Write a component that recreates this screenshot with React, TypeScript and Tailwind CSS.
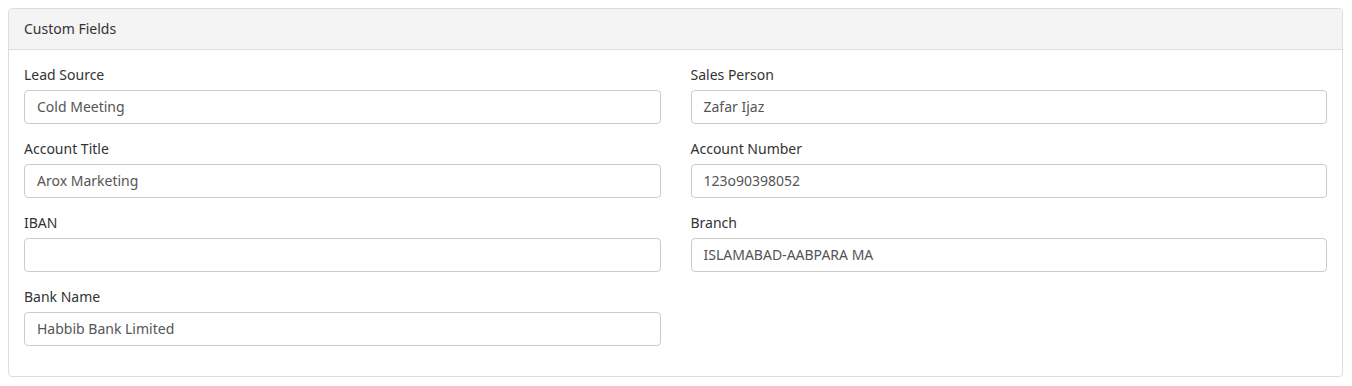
import React from "react";

const fields = [
  { label: "Lead Source", value: "Cold Meeting" },
  { label: "Sales Person", value: "Zafar Ijaz" },
  { label: "Account Title", value: "Arox Marketing" },
  { label: "Account Number", value: "123o90398052" },
  { label: "IBAN", value: "" },
  { label: "Branch", value: "ISLAMABAD-AABPARA MA" },
  { label: "Bank Name", value: "Habbib Bank Limited" },
];

export default function App() {
  return (
    <div className="bg-white py-2 pl-2 pr-[9px] font-['Noto_Sans',sans-serif] text-[14px] text-[#333]">
      <div className="rounded-[4px] border border-[#dddddd] bg-white">
        <div className="rounded-t-[4px] border-b border-[#dddddd] bg-[#f4f4f4] px-[15px] py-[10px] leading-5">
          Custom Fields
        </div>
        <div className="grid grid-cols-2 gap-x-[30px] px-[15px] pt-[15px] pb-[15px]">
          {fields.map((f) => (
            <div key={f.label} className="mb-[15px]">
              <label className="mb-[5px] block leading-5">{f.label}</label>
              <div className="h-[34px] rounded-[4px] border border-[#cccccc] px-3 leading-8 text-[#555]">
                {f.value}
              </div>
            </div>
          ))}
        </div>
      </div>
    </div>
  );
}
